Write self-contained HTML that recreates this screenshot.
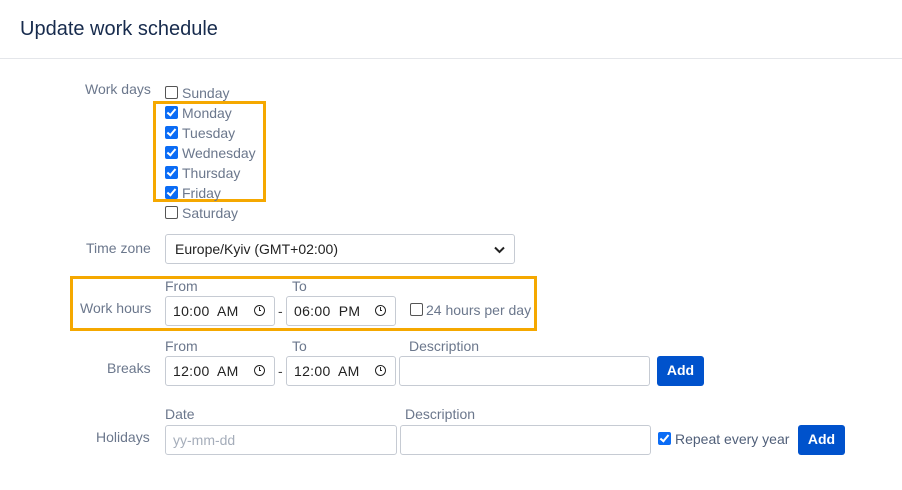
<!DOCTYPE html>
<html><head><style>
body{margin:0;width:902px;height:490px;background:#fff;font-family:"Liberation Sans",Arial,sans-serif;position:relative;overflow:hidden}
.a{position:absolute;white-space:nowrap}
.t{font-size:20px;color:#172b4d;left:20px;top:18px}
.hr{left:0;top:58px;width:902px;height:1px;background:#e4e6ea}
.l{font-size:14px;color:#6b778c}
.cb{position:absolute;width:11px;height:11px;border:1px solid #555;border-radius:2px;background:#fff}
.cb.on{background:#0b6cf5;border-color:#0b6cf5}
.cb.on::after{content:"";position:absolute;left:3px;top:0px;width:3px;height:7px;border:solid #fff;border-width:0 2px 2px 0;transform:rotate(40deg)}
.in{position:absolute;border:1px solid #c6cbd3;border-radius:3px;background:#fff;box-sizing:border-box;font-size:14px;color:#222}
.tm{padding:6px 0 0 7px;letter-spacing:.3px;word-spacing:4px}
.clk{position:absolute;right:9px;top:8px;width:9px;height:9px;border:1.5px solid #222;border-radius:50%}
.clk::after{content:"";position:absolute;left:4px;top:1px;width:2px;height:4px;border:solid #222;border-width:0 0 1.5px 1.5px;box-sizing:border-box}
.btn{position:absolute;background:#0052cc;color:#fff;font-weight:bold;font-size:14px;border-radius:3px;text-align:center;line-height:29px}
.box{position:absolute;border:3px solid #f5a800;box-sizing:border-box}
</style></head><body>
<div class="a t">Update work schedule</div>
<div class="a hr"></div>

<div class="box" style="left:153px;top:101px;width:113px;height:101px"></div>
<div class="a l" style="left:85px;top:81px">Work days</div>
<div class="cb" style="left:165px;top:86px"></div><div class="a l" style="left:182px;top:85px">Sunday</div>
<div class="cb on" style="left:165px;top:106px"></div><div class="a l" style="left:182px;top:105px">Monday</div>
<div class="cb on" style="left:165px;top:126px"></div><div class="a l" style="left:182px;top:125px">Tuesday</div>
<div class="cb on" style="left:165px;top:146px"></div><div class="a l" style="left:182px;top:145px">Wednesday</div>
<div class="cb on" style="left:165px;top:166px"></div><div class="a l" style="left:182px;top:165px">Thursday</div>
<div class="cb on" style="left:165px;top:186px"></div><div class="a l" style="left:182px;top:185px">Friday</div>
<div class="cb" style="left:165px;top:206px"></div><div class="a l" style="left:182px;top:205px">Saturday</div>

<div class="a l" style="left:86px;top:240px">Time zone</div>
<div class="in" style="left:165px;top:234px;width:350px;height:30px;padding:6px 0 0 9px;color:#222">Europe/Kyiv (GMT+02:00)
<svg style="position:absolute;right:9px;top:11px" width="11" height="8" viewBox="0 0 11 8"><path d="M1 1.5l4.5 4.5 4.5-4.5" stroke="#222" stroke-width="2" fill="none"/></svg></div>

<div class="box" style="left:70px;top:276px;width:467px;height:55px"></div>
<div class="a l" style="left:165px;top:278px">From</div>
<div class="a l" style="left:292px;top:278px">To</div>
<div class="a l" style="left:80px;top:300px">Work hours</div>
<div class="in tm" style="left:165px;top:296px;width:110px;height:30px">10:00 AM<div class="clk"></div></div>
<div class="a l" style="left:278px;top:303px;color:#444">-</div>
<div class="in tm" style="left:286px;top:296px;width:110px;height:30px">06:00 PM<div class="clk"></div></div>
<div class="cb" style="left:410px;top:303px"></div><div class="a l" style="left:426px;top:302px">24 hours per day</div>

<div class="a l" style="left:165px;top:338px">From</div>
<div class="a l" style="left:292px;top:338px">To</div>
<div class="a l" style="left:409px;top:338px">Description</div>
<div class="a l" style="left:107px;top:360px">Breaks</div>
<div class="in tm" style="left:165px;top:356px;width:110px;height:30px">12:00 AM<div class="clk"></div></div>
<div class="a l" style="left:278px;top:363px;color:#444">-</div>
<div class="in tm" style="left:286px;top:356px;width:110px;height:30px">12:00 AM<div class="clk"></div></div>
<div class="in" style="left:399px;top:356px;width:251px;height:30px"></div>
<div class="btn" style="left:657px;top:356px;width:47px;height:30px">Add</div>

<div class="a l" style="left:165px;top:406px">Date</div>
<div class="a l" style="left:405px;top:406px">Description</div>
<div class="a l" style="left:96px;top:429px">Holidays</div>
<div class="in" style="left:165px;top:425px;width:232px;height:30px;padding:6px 0 0 7px;color:#a5adba">yy-mm-dd</div>
<div class="in" style="left:400px;top:425px;width:251px;height:30px"></div>
<div class="cb on" style="left:658px;top:432px"></div><div class="a l" style="left:675px;top:431px;color:#505f79">Repeat every year</div>
<div class="btn" style="left:798px;top:425px;width:47px;height:30px">Add</div>
</body></html>
